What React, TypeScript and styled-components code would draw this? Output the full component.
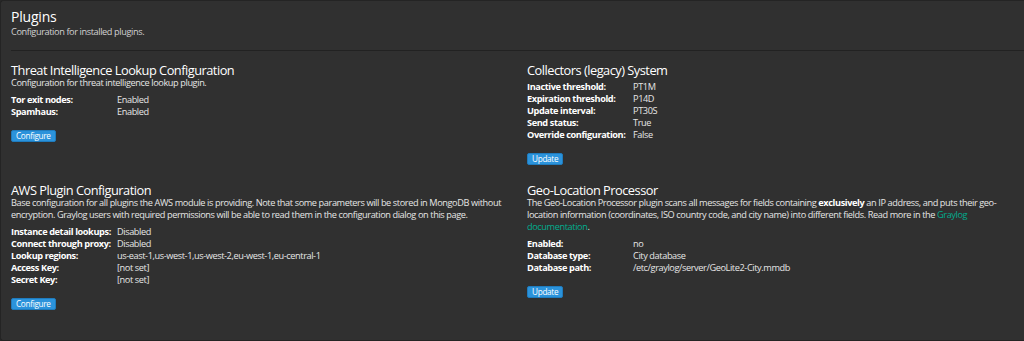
import React from "react";
import styled, { createGlobalStyle } from "styled-components";

const GlobalStyle = createGlobalStyle`
  html, body {
    margin: 0;
    padding: 0;
    background: #2b2b2b;
  }
  body {
    font-family: "Open Sans", "Noto Sans", sans-serif;
    color: #e6e6e6;
    overflow: hidden;
  }
`;

type Row = { label: string; value: React.ReactNode };

type Section = {
  title: string;
  description?: React.ReactNode;
  rows: Row[];
  action: string;
};

const Page = styled.div`
  width: 1024px;
  height: 341px;
  box-sizing: border-box;
  background: #303030;
  border: 1px solid #242424;
  border-right: none;
  border-radius: 3px 0 0 3px;
`;

const Header = styled.div`
  height: 50px;
  box-sizing: border-box;
  padding-top: 7px;
  margin-left: 10px;
  border-bottom: 1px solid #222;
`;

const PageTitle = styled.h1`
  margin: 0;
  font-size: 14px;
  font-weight: 400;
  letter-spacing: -0.2px;
  line-height: 18px;
  color: #fff;
`;

const PageSubtitle = styled.p`
  margin: 0;
  font-size: 9.2px;
  letter-spacing: -0.4px;
  line-height: 12px;
  color: #d0d0d0;
`;

const Columns = styled.div`
  display: grid;
  grid-template-columns: 501px 482px;
  column-gap: 15px;
  row-gap: 18px;
  padding: 12px 0 0 10px;
`;

const Block = styled.div`
  display: flex;
  flex-direction: column;
  align-items: flex-start;
`;

const BlockTitle = styled.h2`
  margin: 0;
  font-size: 12.8px;
  font-weight: 400;
  letter-spacing: -0.5px;
  line-height: 14px;
  color: #fff;
`;

const Description = styled.p`
  margin: 0;
  font-size: 9.2px;
  letter-spacing: -0.4px;
  line-height: 12px;
  color: #e6e6e6;

  b {
    font-weight: 700;
    color: #fff;
  }
  a {
    color: #00ad8e;
    text-decoration: none;
  }
`;

const Details = styled.dl<{ $gap: number }>`
  display: grid;
  grid-template-columns: 106px auto;
  margin: ${(p) => p.$gap}px 0 0;
  font-size: 9.2px;
  letter-spacing: -0.4px;
  line-height: 12px;
`;

const Term = styled.dt`
  font-weight: 700;
  color: #fff;
`;

const Value = styled.dd`
  margin: 0;
  color: #e6e6e6;
`;

const Button = styled.button`
  margin-top: 12px;
  font-family: inherit;
  font-size: 8.2px;
  letter-spacing: -0.3px;
  line-height: 10px;
  padding: 0 4px;
  color: #fff;
  background: #2b93db;
  border: 1px solid #1f7bbd;
  border-radius: 2px;
  cursor: pointer;
`;

const sections: Section[] = [
  {
    title: "Threat Intelligence Lookup Configuration",
    description: "Configuration for threat intelligence lookup plugin.",
    rows: [
      { label: "Tor exit nodes:", value: "Enabled" },
      { label: "Spamhaus:", value: "Enabled" },
    ],
    action: "Configure",
  },
  {
    title: "Collectors (legacy) System",
    rows: [
      { label: "Inactive threshold:", value: "PT1M" },
      { label: "Expiration threshold:", value: "P14D" },
      { label: "Update interval:", value: "PT30S" },
      { label: "Send status:", value: "True" },
      { label: "Override configuration:", value: "False" },
    ],
    action: "Update",
  },
  {
    title: "AWS Plugin Configuration",
    description:
      "Base configuration for all plugins the AWS module is providing. Note that some parameters will be stored in MongoDB without encryption. Graylog users with required permissions will be able to read them in the configuration dialog on this page.",
    rows: [
      { label: "Instance detail lookups:", value: "Disabled" },
      { label: "Connect through proxy:", value: "Disabled" },
      { label: "Lookup regions:", value: "us-east-1,us-west-1,us-west-2,eu-west-1,eu-central-1" },
      { label: "Access Key:", value: "[not set]" },
      { label: "Secret Key:", value: "[not set]" },
    ],
    action: "Configure",
  },
  {
    title: "Geo-Location Processor",
    description: (
      <>
        The Geo-Location Processor plugin scans all messages for fields containing <b>exclusively</b> an IP
        address, and puts their geo-location information (coordinates, ISO country code, and city name) into
        different fields. Read more in the <a href="#">Graylog documentation</a>.
      </>
    ),
    rows: [
      { label: "Enabled:", value: "no" },
      { label: "Database type:", value: "City database" },
      { label: "Database path:", value: "/etc/graylog/server/GeoLite2-City.mmdb" },
    ],
    action: "Update",
  },
];

const App: React.FC = () => {
  return (
    <>
      <GlobalStyle />
      <Page>
        <Header>
          <PageTitle>Plugins</PageTitle>
          <PageSubtitle>Configuration for installed plugins.</PageSubtitle>
        </Header>
        <Columns>
          {sections.map((s) => (
            <Block key={s.title}>
              <BlockTitle>{s.title}</BlockTitle>
              {s.description && <Description>{s.description}</Description>}
              <Details $gap={s.description ? 5 : 4}>
                {s.rows.map((r) => (
                  <React.Fragment key={r.label}>
                    <Term>{r.label}</Term>
                    <Value>{r.value}</Value>
                  </React.Fragment>
                ))}
              </Details>
              <Button>{s.action}</Button>
            </Block>
          ))}
        </Columns>
      </Page>
    </>
  );
};

export default App;
